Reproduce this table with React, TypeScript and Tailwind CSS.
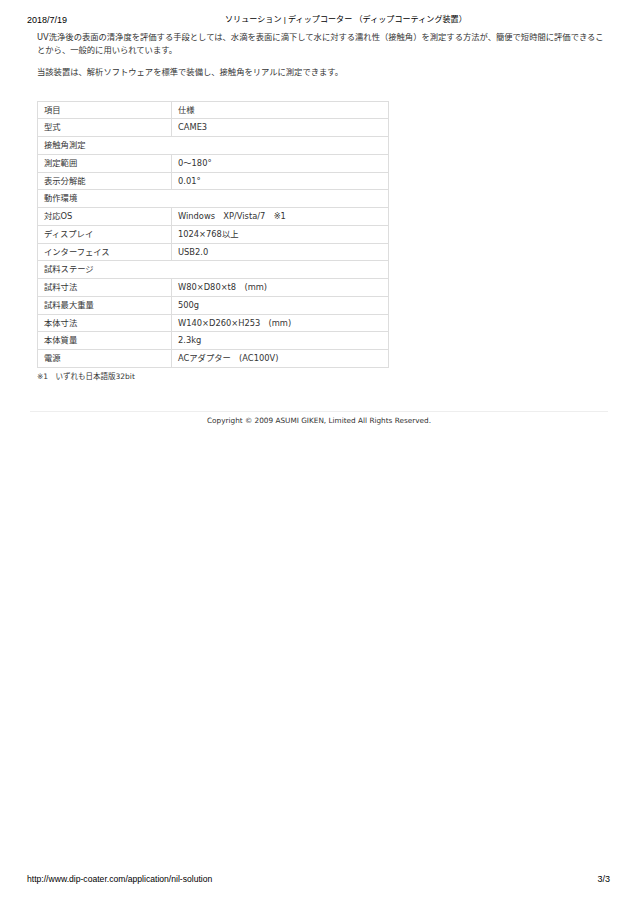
import React from 'react';

const rows: { label: string; value?: string }[] = [
  { label: '項目', value: '仕様' },
  { label: '型式', value: 'CAME3' },
  { label: '接触角測定' },
  { label: '測定範囲', value: '0～180°' },
  { label: '表示分解能', value: '0.01°' },
  { label: '動作環境' },
  { label: '対応OS', value: 'Windows　XP/Vista/7　※1' },
  { label: 'ディスプレイ', value: '1024×768以上' },
  { label: 'インターフェイス', value: 'USB2.0' },
  { label: '試料ステージ' },
  { label: '試料寸法', value: 'W80×D80×t8　(mm)' },
  { label: '試料最大重量', value: '500g' },
  { label: '本体寸法', value: 'W140×D260×H253　(mm)' },
  { label: '本体質量', value: '2.3kg' },
  { label: '電源', value: 'ACアダプター　(AC100V)' },
];

const body = "font-['DejaVu_Sans','Noto_Sans_CJK_JP',sans-serif]";
const print = "font-['Liberation_Sans','Noto_Sans_CJK_JP',sans-serif]";

export default function App() {
  return (
    <div className={`w-[638px] h-[902px] bg-white flex flex-col text-[#333] ${body}`}>
      {/* print header */}
      <div className={`flex items-center pl-[27px] pt-[14px] h-[27px] text-black ${print}`}>
        <span className="w-[198px] text-[9px]">2018/7/19</span>
        <span className="text-[8.1px]">ソリューション | ディップコーター （ディップコーティング装置）</span>
      </div>

      <main className="pl-[37px] pr-[30px] text-[8.3px] leading-[12.5px]">
        <p className="mt-[4px]">
          UV洗浄後の表面の清浄度を評価する手段としては、水滴を表面に滴下して水に対する濡れ性（接触角）を測定する方法が、簡便で短時間に評価できることから、一般的に用いられています。
        </p>
        <p className="mt-[10px]">当該装置は、解析ソフトウェアを標準で装備し、接触角をリアルに測定できます。</p>

        <table className="mt-[22px] w-[352px] border-collapse border border-[#ddd]">
          <tbody>
            {rows.map((r) => (
              <tr key={r.label} className="h-[17.75px]">
                {r.value === undefined ? (
                  <td colSpan={2} className="border border-[#ddd] px-[6px] py-0">
                    {r.label}
                  </td>
                ) : (
                  <>
                    <td className="w-[134px] border border-[#ddd] px-[6px] py-0">{r.label}</td>
                    <td className="border border-[#ddd] px-[6px] py-0">{r.value}</td>
                  </>
                )}
              </tr>
            ))}
          </tbody>
        </table>
        <p className="mt-[3px] text-[7.5px]">※1　いずれも日本語版32bit</p>
      </main>

      <footer className="mx-[30px] mt-[28px] border-t border-[#eee] pt-[4px] text-center text-[7.3px] text-[#333]">
        Copyright © 2009 ASUMI GIKEN, Limited All Rights Reserved.
      </footer>

      <div className={`mt-auto flex justify-between px-[27px] pb-[16px] text-black ${print}`}>
        <span className="text-[8.6px]">http://www.dip-coater.com/application/nil-solution</span>
        <span className="pr-[1px] text-[9px]">3/3</span>
      </div>
    </div>
  );
}
